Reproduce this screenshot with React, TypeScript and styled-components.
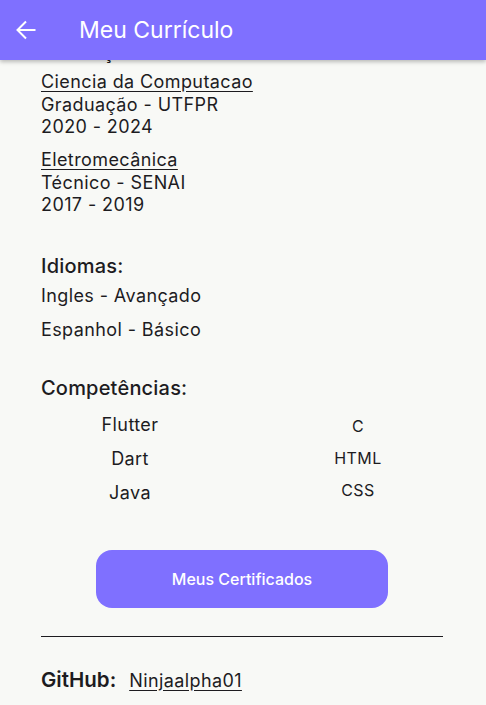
import React, { useEffect, useRef } from 'react';
import styled, { createGlobalStyle } from 'styled-components';

const GlobalStyle = createGlobalStyle`
  html, body {
    margin: 0;
    padding: 0;
    height: 100%;
    overflow: hidden;
  }
  body {
    font-family: Inter, "Noto Sans", sans-serif;
    background-color: #f8f9f6;
    color: #1d1c1f;
  }
`;

const StyledPage = styled.div`
  display: flex;
  flex-direction: column;
  height: 100vh;
`;

const StyledAppBar = styled.header`
  position: relative;
  z-index: 1;
  display: flex;
  align-items: center;
  flex-shrink: 0;
  height: 60px;
  padding: 0 14px;
  background-color: #7f70ff;
  box-shadow: 0 2px 4px rgba(0, 0, 0, 0.25);
`;

const StyledBackButton = styled.button`
  display: flex;
  align-items: center;
  justify-content: center;
  width: 24px;
  height: 24px;
  margin-right: 41px;
  padding: 0;
  border: none;
  background: none;
  cursor: pointer;
`;

const StyledTitle = styled.h1`
  margin: 0;
  font-size: 23px;
  font-weight: 400;
  color: #ffffff;
`;

const StyledScroll = styled.main`
  flex: 1;
  overflow-y: auto;
  scrollbar-width: none;

  &::-webkit-scrollbar {
    display: none;
  }
`;

const StyledContent = styled.div`
  display: flex;
  flex-direction: column;
  padding: 40px 43px 40px 41px;
`;

const StyledHeading = styled.h2<{ $top?: number }>`
  margin: ${({ $top }) => $top ?? 0}px 0 0;
  font-size: 20px;
  line-height: 26px;
  font-weight: 500;
  letter-spacing: 0.2px;
`;

const StyledCourse = styled.div<{ $top: number }>`
  display: flex;
  flex-direction: column;
  margin-top: ${({ $top }) => $top}px;
  font-size: 18px;
  line-height: 22.5px;
  letter-spacing: 0.4px;
`;

const StyledCourseName = styled.span`
  text-decoration: underline;
  text-underline-offset: 3px;
`;

const StyledLanguage = styled.div`
  font-size: 18px;
  line-height: 22px;
  letter-spacing: 0.4px;
  padding: 6px 0;
`;

const StyledSkills = styled.div`
  display: grid;
  grid-template-columns: 178px 116px;
  column-gap: 81px;
  margin-top: 7px;
`;

const StyledSkillColumn = styled.ul<{ $size: number; $line: number; $top: number }>`
  display: flex;
  flex-direction: column;
  align-items: center;
  margin: ${({ $top }) => $top}px 0 0;
  padding: 0;
  list-style: none;
  font-size: ${({ $size }) => $size}px;
  line-height: ${({ $line }) => $line}px;
  letter-spacing: 0.4px;
`;

const StyledButton = styled.button`
  align-self: center;
  width: 292px;
  height: 58px;
  margin-top: 40px;
  border: none;
  border-radius: 16px;
  background-color: #7f70ff;
  color: #ffffff;
  font-family: Inter, "Noto Sans", sans-serif;
  font-size: 16px;
  font-weight: 500;
  cursor: pointer;
`;

const StyledDivider = styled.hr`
  width: 100%;
  margin: 28px 0 0;
  border: none;
  border-top: 1.5px solid #1d1c1f;
`;

const StyledGitHubRow = styled.div`
  display: flex;
  align-items: baseline;
  gap: 13px;
  margin-top: 30px;
`;

const StyledGitHubLabel = styled.span`
  font-size: 20.5px;
  line-height: 26px;
  font-weight: 600;
`;

const StyledGitHubLink = styled.a`
  font-size: 18px;
  letter-spacing: 0.4px;
  color: inherit;
  text-decoration: underline;
  text-underline-offset: 3px;
`;

const courses = [
  { name: 'Ciencia da Computacao', level: 'Graduação - UTFPR', years: '2020 - 2024' },
  { name: 'Eletromecânica', level: 'Técnico - SENAI', years: '2017 - 2019' },
];

const languages = ['Ingles - Avançado', 'Espanhol - Básico'];

const App: React.FunctionComponent = () => {
  const scrollRef = useRef<HTMLElement>(null);

  useEffect(() => {
    if (scrollRef.current) {
      scrollRef.current.scrollTop = 61;
    }
  }, []);

  return (
    <StyledPage>
      <GlobalStyle />
      <StyledAppBar>
        <StyledBackButton aria-label="Voltar">
          <svg width="24" height="24" viewBox="0 0 24 24" fill="none">
            <path d="M21.5 12H4M12 3.5L3.5 12l8.5 8.5" stroke="#ffffff" strokeWidth="2" />
          </svg>
        </StyledBackButton>
        <StyledTitle>Meu Currículo</StyledTitle>
      </StyledAppBar>
      <StyledScroll ref={scrollRef}>
        <StyledContent>
          <StyledHeading>Formação:</StyledHeading>
          {courses.map((course, i) => (
            <StyledCourse key={course.name} $top={i === 0 ? 6 : 10.5}>
              <StyledCourseName>{course.name}</StyledCourseName>
              <span>{course.level}</span>
              <span>{course.years}</span>
            </StyledCourse>
          ))}

          <StyledHeading $top={36}>Idiomas:</StyledHeading>
          {languages.map((lang) => (
            <StyledLanguage key={lang}>{lang}</StyledLanguage>
          ))}

          <StyledHeading $top={28}>Competências:</StyledHeading>
          <StyledSkills>
            <StyledSkillColumn $size={18} $line={34} $top={0}>
              <li>Flutter</li>
              <li>Dart</li>
              <li>Java</li>
            </StyledSkillColumn>
            <StyledSkillColumn $size={16} $line={32} $top={2}>
              <li>C</li>
              <li>HTML</li>
              <li>CSS</li>
            </StyledSkillColumn>
          </StyledSkills>

          <StyledButton>Meus Certificados</StyledButton>
          <StyledDivider />
          <StyledGitHubRow>
            <StyledGitHubLabel>GitHub:</StyledGitHubLabel>
            <StyledGitHubLink href="#">Ninjaalpha01</StyledGitHubLink>
          </StyledGitHubRow>
        </StyledContent>
      </StyledScroll>
    </StyledPage>
  );
};

export default App;
